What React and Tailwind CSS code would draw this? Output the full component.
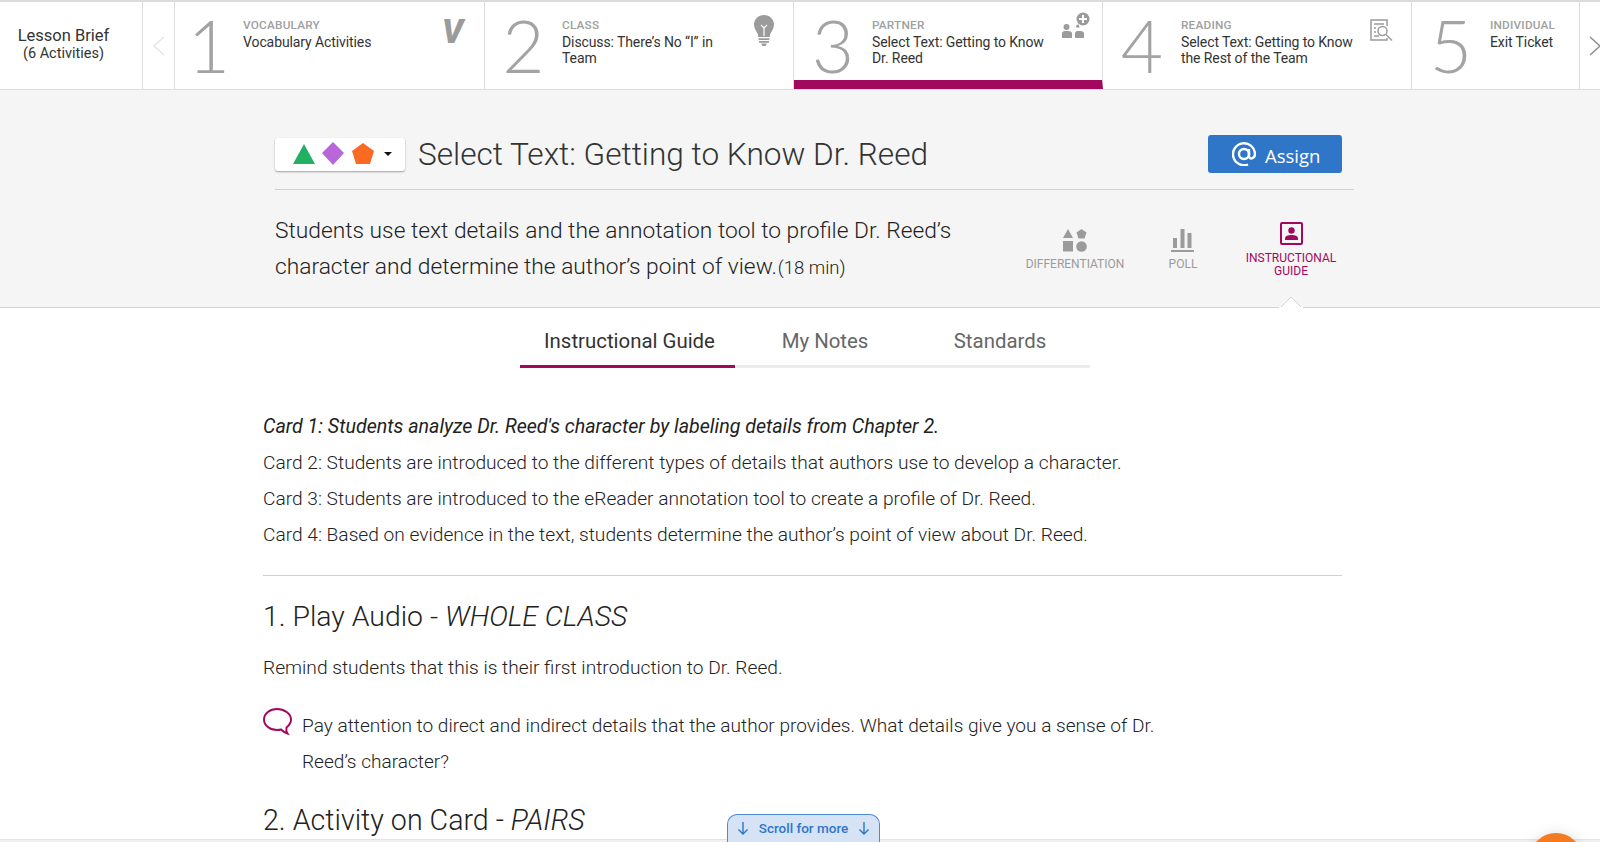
const F = "font-['Roboto','Liberation_Sans',sans-serif]";

function VIcon() {
  return <span className="font-['Roboto',sans-serif] font-black italic text-[33px] leading-none text-[#9b9b9b]">V</span>;
}
function Bulb() {
  return (
    <svg width="20" height="31" viewBox="0 0 20 31" fill="#9b9b9b">
      <path d="M10 0C4.500 0 0 4.200 0 9.500c0 4 2.200 6 3.500 9 .5 1.200.7 2.300.8 3.500h11.400c.1-1.200.3-2.300.8-3.500 1.300-3 3.500-5 3.500-9C20 4.200 15.500 0 10 0z" />
      <path d="M4.600 23.300h10.800v1.800H4.600zM5 26h10v1.800H5zM7 28.600h6L11.500 31h-3z" />
      <path d="M7 10l3 3 3-3M10 13v8" stroke="#fff" strokeWidth="1.200" fill="none" />
    </svg>
  );
}
function Partner() {
  return (
    <svg width="28" height="27" viewBox="0 0 28 27" fill="#9b9b9b">
      <circle cx="4.500" cy="15" r="3" />
      <path d="M0 26v-4.500C0 19.500 1.500 19 4.500 19S10 19.500 10 21.500V26z" />
      <path d="M13 26v-4.500C13 19.500 14.500 19 17 19s5 .5 5 2.500V26z" />
      <path d="M14 15.500a3 3 0 0 1 2.500-3.300l1.200 3.300z" />
      <circle cx="21" cy="7" r="6.500" />
      <path d="M21 3v8M17 7h8" stroke="#fff" strokeWidth="2" />
    </svg>
  );
}
function Reading() {
  return (
    <svg width="24" height="23" viewBox="0 0 24 23" fill="none" stroke="#9b9b9b" strokeWidth="1.500">
      <path d="M17 7V1H1v20h16v-2" />
      <path d="M4 5h10M4 9h2M4 13h2M4 17h5" />
      <circle cx="12.500" cy="12" r="4.500" />
      <path d="M16 15.500l6 6" />
    </svg>
  );
}

function Num({ n, numW }) {
  return <div className={`${numW} shrink-0 flex justify-center pt-[3px] font-['Lato',sans-serif] text-[73px] leading-[80px] font-light text-[#a3a3a3]`}>{n}</div>;
}

function Card({ n, cat, title, icon, numW, active, iconCls, w }) {
  return (
    <div className={`${w} h-full shrink-0 border-r border-[#dcdcdc] flex relative box-border ${active ? "border-b-[9px] border-b-[#a3085f]" : ""}`}>
      <Num n={n} numW={numW} />
      <div className="pt-[15px] min-w-0">
        <div className="h-[17px] text-[11.8px] leading-[16px] font-medium tracking-[0.2px] text-[#a0a0a0] uppercase">{cat}</div>
        <div className="text-[14px] leading-[16px] text-[#333] w-[182px] tracking-[-0.1px]">{title}</div>
      </div>
      {icon && <div className={`absolute ${iconCls}`}>{icon}</div>}
    </div>
  );
}

function Nav() {
  return (
    <div className="h-[90px] shrink-0 border-t-2 border-b border-[#dcdcdc] flex box-border bg-white">
      <div className="w-[143px] shrink-0 border-r border-[#dcdcdc] flex flex-col items-center pt-[25px] pr-[15px] text-[#333]">
        <div className="text-[16.5px] leading-[18px]">Lesson Brief</div>
        <div className="text-[14.5px] leading-[18px]">(6 Activities)</div>
      </div>
      <div className="w-[32px] shrink-0 border-r border-[#dcdcdc] flex items-center justify-start pl-[9px]">
        <svg width="14" height="20" viewBox="0 0 14 20" fill="none" stroke="#e6e6e6" strokeWidth="1.500"><path d="M12 1L2 10l10 9" /></svg>
      </div>
      <Card w="w-[310px]" n="1" cat="Vocabulary" title="Vocabulary Activities" numW="w-[68px]" icon={<VIcon />} iconCls="top-[13px] left-[267px]" />
      <Card w="w-[309px]" n="2" cat="Class" title="Discuss: There’s No “I” in Team" numW="w-[77px]" icon={<Bulb />} iconCls="top-[13px] left-[269px]" />
      <Card w="w-[309px]" n="3" cat="Partner" title="Select Text: Getting to Know Dr. Reed" numW="w-[78px]" active icon={<Partner />} iconCls="top-[10px] left-[268px]" />
      <Card w="w-[309px]" n="4" cat="Reading" title="Select Text: Getting to Know the Rest of the Team" numW="w-[78px]" icon={<Reading />} iconCls="top-[17px] left-[267px]" />
      <div className="w-[168px] shrink-0 border-r border-[#dcdcdc] flex">
        <Num n="5" numW="w-[78px]" />
        <div className="pt-[15px]">
          <div className="h-[17px] text-[11.8px] leading-[16px] font-medium tracking-[0.2px] text-[#a0a0a0] uppercase">Individual</div>
          <div className="text-[14px] leading-[16px] text-[#333] tracking-[-0.1px]">Exit Ticket</div>
        </div>
      </div>
      <div className="flex-1 flex items-center pl-[8px] overflow-hidden">
        <svg width="14" height="20" viewBox="0 0 14 20" fill="none" stroke="#8e8e8e" strokeWidth="1.500" className="shrink-0"><path d="M2 1l10 9-10 9" /></svg>
      </div>
    </div>
  );
}

function Shapes() {
  return (
    <svg width="86" height="24" viewBox="0 0 86 24">
      <path d="M0 22L11 2l11 20z" fill="#22b163" />
      <path d="M40 0l11 11-11 12-11-12z" fill="#b966d8" />
      <path d="M70 1l11 8-4 13H63L59 9z" fill="#fb6a22" />
    </svg>
  );
}

function ToolLabel({ children, active }) {
  return <div className={`text-[12px] leading-[13px] font-[450] uppercase text-center ${active ? "text-[#a3085f]" : "text-[#9b9b9b]"}`}>{children}</div>;
}

function Header() {
  return (
    <div className="h-[218px] shrink-0 bg-[#f5f5f5] border-b border-[#d4d4d4] relative flex flex-col pl-[275px]">
      <div className="w-[1079px] h-[100px] shrink-0 flex items-center border-b border-[#d0d0d0] pt-[29px]">
        <div className="h-[33px] w-[130px] shrink-0 bg-white rounded-[3px] shadow-[0_1px_2px_rgba(0,0,0,0.35)] flex items-center pl-[18px]">
          <Shapes />
          <span className="ml-[5px] w-0 h-0 border-x-[4px] border-x-transparent border-t-[4px] border-t-[#111]" />
        </div>
        <div className="ml-[13px] pt-[2px] text-[31.6px] font-light text-[#333] leading-[40px] flex-1">Select Text: Getting to Know Dr. Reed</div>
        <div className="mr-[12px] w-[134px] h-[38px] rounded-[3px] bg-[#2f76c9] flex items-center pl-[24px] gap-[9px] text-white text-[18.5px] font-['Open_Sans',sans-serif]">
          <svg width="24" height="24" viewBox="0 0 24 24" fill="none" stroke="#fff" strokeWidth="2.400">
            <circle cx="12" cy="12" r="5" />
            <path d="M17 7v7c0 4 6 3 6-2A11 11 0 1 0 16 22.500" />
          </svg>
          <span className="pt-[3px]">Assign</span>
        </div>
      </div>
      <div className="w-[1079px] flex justify-between">
        <div className="w-[700px] pt-[23px] text-[22.75px] font-[350] leading-[36px] text-[#222]">
          Students use text details and the annotation tool to profile Dr. Reed’s character and determine the author’s point of view.<span className="ml-[1px] text-[18.500px] font-light">(18 min)</span>
        </div>
        <div className="flex items-start w-[334px] mr-[4px]">
          <div className="w-[118px] flex flex-col items-center pt-[39px] gap-[6px] shrink-0">
            <svg width="24" height="23" viewBox="0 0 24 23" fill="#9b9b9b">
              <path d="M5 0l5 9H0zM0 12h10v10.500H0z" /><circle cx="18.500" cy="17.500" r="5.300" />
              <path d="M18.500 0l5 3.500-2 6h-6l-2-6z" />
            </svg>
            <ToolLabel>Differentiation</ToolLabel>
          </div>
          <div className="w-[98px] flex flex-col items-center pt-[39px] gap-[6px] shrink-0">
            <svg width="24" height="23" viewBox="0 0 24 23" fill="#9b9b9b">
              <path d="M2 9h4v10H2zM9.500 0h4v19h-4zM16.500 4h4v15h-4zM0 21h23v2H0z" />
            </svg>
            <ToolLabel>Poll</ToolLabel>
          </div>
          <div className="w-[118px] flex flex-col items-center pt-[32px] gap-[7px] shrink-0">
            <svg width="23" height="23" viewBox="0 0 23 23" fill="#a3085f">
              <rect x="1" y="1" width="21" height="21" rx="1" fill="none" stroke="#a3085f" strokeWidth="2" />
              <circle cx="11.500" cy="8.500" r="3.200" />
              <path d="M5 18v-1.500C5 14 8 13 11.500 13s6.500 1 6.500 3.500V18z" />
            </svg>
            <ToolLabel active>Instructional<br />Guide</ToolLabel>
          </div>
        </div>
      </div>
      <svg width="24" height="12" viewBox="0 0 24 12" className="absolute left-[1279px] bottom-[-1px]">
        <path d="M1 12L12 1l11 11z" fill="#fff" stroke="#d4d4d4" />
        <path d="M0 12h24" stroke="#fff" strokeWidth="2" />
      </svg>
    </div>
  );
}

function Tabs() {
  return (
    <div className="w-[570px] ml-[520px] mt-[13px] flex h-[47px] border-b-[3px] border-[#ebebeb] text-[20.4px] font-[450]">
      <div className="w-[215px] h-[47px] border-b-[3px] border-[#a3085f] text-center text-[#333] pl-[4px] pt-[5px]">Instructional Guide</div>
      <div className="w-[180px] text-center text-[#666] pt-[5px]">My Notes</div>
      <div className="w-[170px] text-center text-[#666] pt-[5px]">Standards</div>
    </div>
  );
}

function Content() {
  return (
    <div className="w-[1079px] ml-[263px] mt-[41px] text-[19.17px] font-[350] text-[#222]">
      <div className="leading-[36px]">
        <div className="font-[450] italic text-[19.650px]">Card 1: Students analyze Dr. Reed's character by labeling details from Chapter 2.</div>
        <div>Card 2: Students are introduced to the different types of details that authors use to develop a character.</div>
        <div>Card 3: Students are introduced to the eReader annotation tool to create a profile of Dr. Reed.</div>
        <div>Card 4: Based on evidence in the text, students determine the author’s point of view about Dr. Reed.</div>
      </div>
      <div className="h-px bg-[#d0d0d0] mt-[22px]" />
      <h2 className="mt-[21px] text-[28.400px] font-light leading-[40px]">1. Play Audio - <em>WHOLE CLASS</em></h2>
      <p className="mt-[13px] leading-[36px]">Remind students that this is their first introduction to Dr. Reed.</p>
      <div className="flex mt-[22px]">
        <svg width="29" height="28" viewBox="0 0 29 28" fill="none" stroke="#a3085f" strokeWidth="2" className="shrink-0 mr-[10px]">
          <path d="M14 1C7 1 1 5.500 1 11.500S7 22 14 22c1.500 0 3-.2 4-.5 1.500 1.500 3.500 3 6.500 4-1-1.500-1.500-3.500-1-6C26 17.500 28 14.500 28 11.500 28 5.500 21 1 14 1z" />
        </svg>
        <p className="w-[860px] leading-[36px] text-[19.08px]">Pay attention to direct and indirect details that the author provides. What details give you a sense of Dr. Reed’s character?</p>
      </div>
      <h2 className="mt-[20px] text-[28.600px] font-light leading-[40px]">2. Activity on Card - <em>PAIRS</em></h2>
    </div>
  );
}

export default function App() {
  return (
    <div className={`${F} w-[1600px] h-[842px] overflow-hidden relative bg-white flex flex-col`}>
      <Nav />
      <Header />
      <Tabs />
      <Content />
      <div className="absolute left-0 right-0 bottom-0 h-[3px] bg-[#f0f0f0] border-t border-[#e4e4e4]" />
      <div className="absolute left-[727px] bottom-0 w-[153px] h-[28px] bg-[#d5e3f5] border border-b-0 border-[#4a8ad8] rounded-t-[10px] flex items-center justify-center gap-[10px] text-[13.5px] font-medium text-[#2f76c9]">
        <svg width="12" height="13" viewBox="0 0 12 13" fill="none" stroke="#2f76c9" strokeWidth="1.400"><path d="M6 0v12M1.500 7.500L6 12l4.500-4.500" /></svg>
        Scroll for more
        <svg width="12" height="13" viewBox="0 0 12 13" fill="none" stroke="#2f76c9" strokeWidth="1.400"><path d="M6 0v12M1.500 7.500L6 12l4.500-4.500" /></svg>
      </div>
      <div className="absolute left-[1529px] top-[833px] w-[54px] h-[54px] rounded-full bg-[#f47b20] shadow-[0_0_14px_rgba(0,0,0,0.12)]" />
    </div>
  );
}
